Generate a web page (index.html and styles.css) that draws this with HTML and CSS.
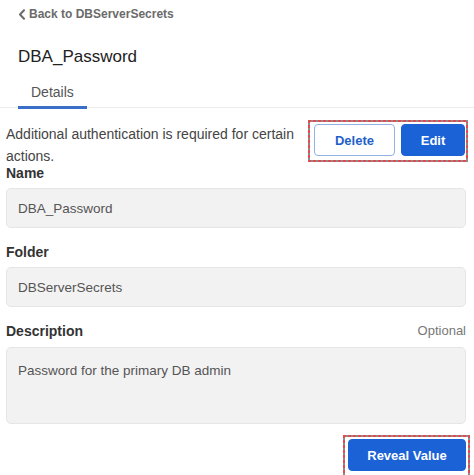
FILE: index.html
```html
<!DOCTYPE html>
<html>
<head>
<meta charset="utf-8">
<link rel="stylesheet" href="styles.css">
</head>
<body>
<div class="page">
  <header class="head">
    <a class="back" href="#">
      <svg class="chev" width="8" height="11" viewBox="0 0 8 11"><path d="M6 1.2 L2 5.5 L6 9.8" fill="none" stroke="#6b6b6b" stroke-width="2" stroke-linecap="round" stroke-linejoin="round"/></svg>
      <span>Back to DBServerSecrets</span>
    </a>
    <h1 class="title">DBA_Password</h1>
  </header>
  <nav class="tabs">
    <div class="tab active">Details</div>
  </nav>
  <main class="content">
    <div class="info-row">
      <p class="info">Additional authentication is required for certain actions.</p>
      <div class="hl">
        <button class="btn btn-outline">Delete</button>
        <button class="btn btn-primary btn-edit">Edit</button>
      </div>
    </div>
    <div class="field">
      <div class="label-row"><label class="label">Name</label></div>
      <div class="input">DBA_Password</div>
    </div>
    <div class="field">
      <div class="label-row"><label class="label">Folder</label></div>
      <div class="input">DBServerSecrets</div>
    </div>
    <div class="field">
      <div class="label-row"><label class="label">Description</label><span class="optional">Optional</span></div>
      <div class="input textarea">Password for the primary DB admin</div>
    </div>
    <div class="actions">
      <div class="hl hl-reveal">
        <button class="btn btn-primary btn-reveal">Reveal Value</button>
      </div>
    </div>
  </main>
</div>
</body>
</html>
```

FILE: styles.css
```css
* { box-sizing: border-box; }
html, body { margin: 0; padding: 0; background: #fff; }
body { font-family: "Liberation Sans", Arial, sans-serif; color: #333; }
.page { width: 474px; height: 475px; overflow: hidden; }

.head { padding: 6px 0 0 18px; }
.back { display: flex; align-items: center; gap: 3px; text-decoration: none; color: #6b6b6b; font-size: 12px; font-weight: 700; line-height: 16px; }
.chev { display: block; margin-top: 0; }
.title { margin: 24px 0 0 0; font-size: 17px; font-weight: 400; line-height: 22px; color: #222; }

.tabs { display: flex; border-bottom: 1px solid #ececec; padding-left: 18px; margin-top: 15px; }
.tab { font-size: 14px; line-height: 18px; color: #555; padding: 0 13px 5px; border-bottom: 3px solid transparent; margin-bottom: -2px; }
.tab.active { border-bottom-color: #3a6fc9; }

.content { padding: 0 8px 0 6px; }
.info-row { display: flex; justify-content: space-between; align-items: flex-start; margin-top: 14px; margin-bottom: -2px; }
.info { margin: 1px 0 0 0; width: 290px; font-size: 14px; line-height: 22px; color: #444; }

.hl { position: relative; display: flex; gap: 6px; padding: 2px 1px 4px 4px; }
.hl::before {
  content: ""; position: absolute; inset: -2px; pointer-events: none;
  background:
    repeating-linear-gradient(90deg, #e24a4f 0 3px, #8d8d8d 3px 5px) top left / 100% 2px no-repeat,
    repeating-linear-gradient(90deg, #e24a4f 0 3px, #8d8d8d 3px 5px) bottom left / 100% 2px no-repeat,
    repeating-linear-gradient(180deg, #e24a4f 0 3px, #8d8d8d 3px 5px) top left / 2px 100% no-repeat,
    repeating-linear-gradient(180deg, #e24a4f 0 3px, #8d8d8d 3px 5px) top right / 2px 100% no-repeat;
}

.btn { font-family: "Liberation Sans", Arial, sans-serif; font-size: 13px; font-weight: 700; height: 32px; border-radius: 4px; cursor: pointer; padding: 0; }
.btn-outline { width: 81px; background: #fff; color: #1f5fc9; border: 1px solid #90b3e4; }
.btn-primary { background: #1a62d6; color: #fff; border: 1px solid #1a62d6; }
.btn-edit { width: 64px; }

.field { display: flex; flex-direction: column; }
.field + .field { margin-top: 16px; }
.label-row { display: flex; justify-content: space-between; align-items: center; line-height: 16px; }
.label { font-size: 14px; font-weight: 700; color: #333; }
.optional { font-size: 13px; color: #777; }
.input { margin-top: 7px; height: 40px; background: #f2f2f2; border: 1px solid #e6e6e6; border-radius: 5px; padding: 0 11px; display: flex; align-items: center; font-size: 13.5px; color: #555; }
.textarea { margin-top: 8px; height: 77px; align-items: flex-start; padding-top: 14px; line-height: 18px; }

.actions { display: flex; justify-content: flex-end; margin-top: 13px; margin-right: -2px; }
.hl-reveal { padding: 2px 2px 4px 3px; }
.btn-reveal { width: 118px; height: 32px; font-size: 13px; }
```
